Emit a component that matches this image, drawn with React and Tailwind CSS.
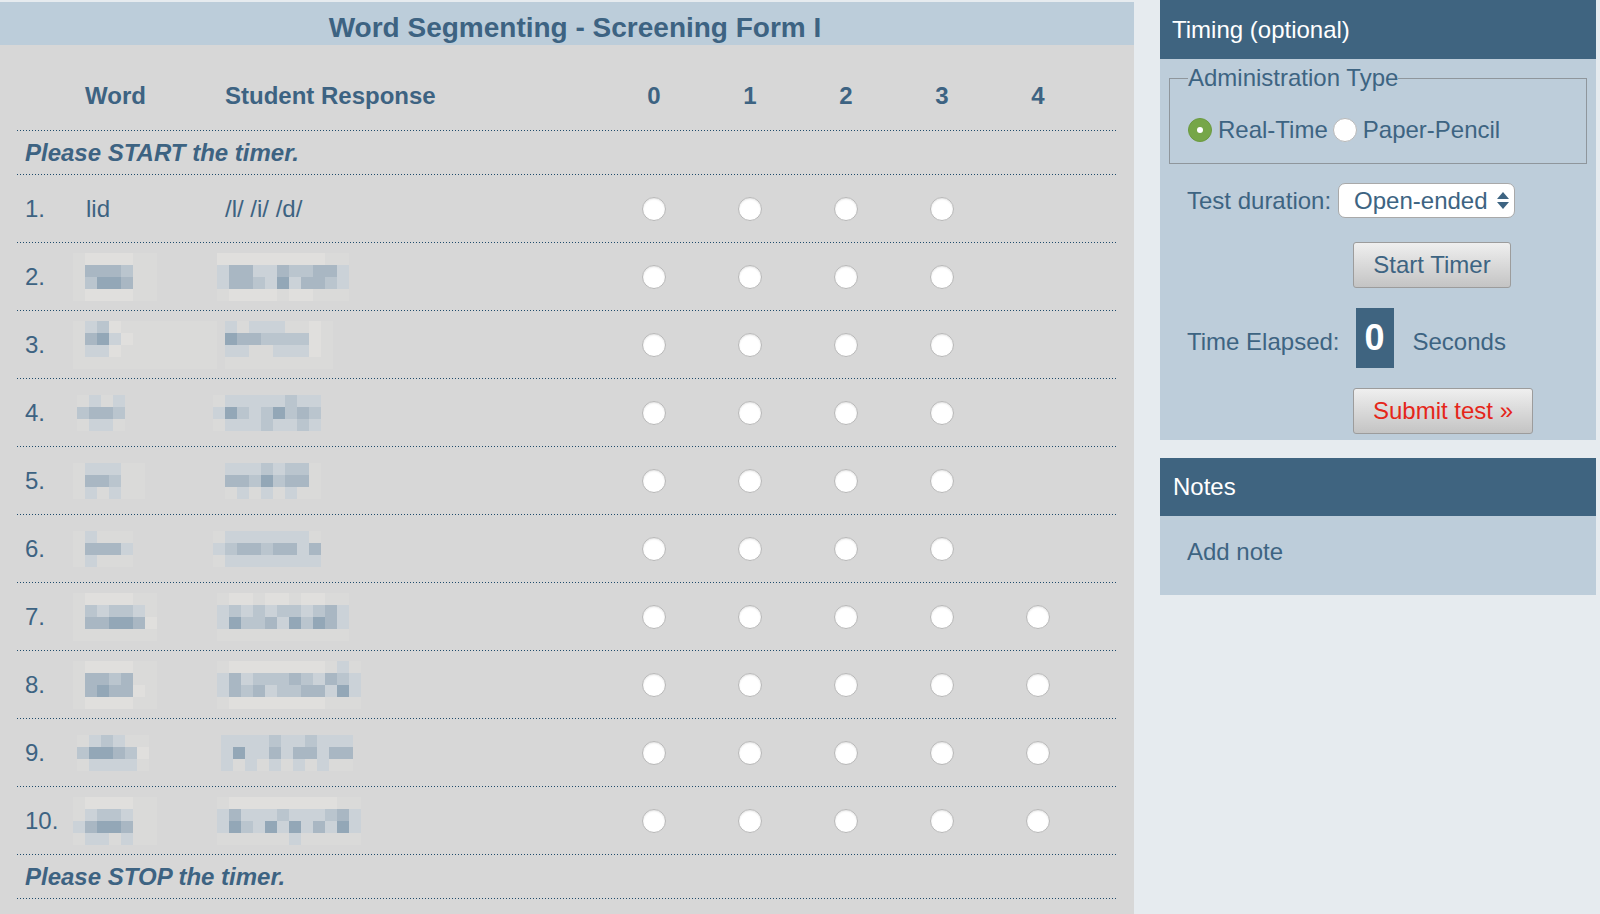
import React from 'react'

// pixel levels used for the blurred (mosaic) cells
const LEVEL = {
  '.': 'bg-transparent',
  v: 'bg-[#dadad9]',
  w: 'bg-[#e0dfdd]',
  '1': 'bg-[#cbd2d8]',
  '2': 'bg-[#bac5ce]',
  '3': 'bg-[#a9b7c3]',
  '4': 'bg-[#93a7b7]',
}

const ROWS = [
  { n: '1.', word: 'lid', resp: '/l/ /i/ /d/', max: 3 },
  {
    n: '2.',
    max: 3,
    w: { ml: 'ml-0', p: ['vwwwwvv', 'v3332vv', 'v2443vv', 'vwwwwvv'] },
    r: { ml: 'ml-[4px]', p: ['wwwwwwwwwvv', '13311322331', '13321413321', 'vwwwwvwwvvv'] },
  },
  {
    n: '3.',
    max: 3,
    w: { ml: 'ml-0', p: ['v12wvvvvvvvv', 'v341wvvvvvvv', 'v11wvvvvvvvv', 'vvvvvvvvvvvv'] },
    r: { ml: 'ml-[12px]', p: ['1v111vvwv', '4332222wv', '11vv111wv', 'vvvvvvvvv'] },
  },
  {
    n: '4.',
    max: 3,
    w: { ml: 'ml-[4px]', p: ['v1v1', '2332', 'v11v'] },
    r: { ml: 'ml-0', p: ['v11111211', '142124232', 'v11121121'] },
  },
  {
    n: '5.',
    max: 3,
    w: { ml: 'ml-0', p: ['v111vv', 'v332vv', 'v1v1vv'] },
    r: { ml: 'ml-[12px]', p: ['1112122v', '3324233v', 'v1v1v1vv'] },
  },
  {
    n: '6.',
    max: 3,
    w: { ml: 'ml-0', p: ['v1vvv', 'v3331', 'v1vvv'] },
    r: { ml: 'ml-0', p: ['v1111111v', '123323313', 'v11111111'] },
  },
  {
    n: '7.',
    max: 4,
    w: { ml: 'ml-0', p: ['vwwwwvv', 'v21221v', 'v33443w', 'vvvvvvv'] },
    r: { ml: 'ml-[4px]', p: ['vwwvwwvwwvv', '12121221231', '14223142431', 'vvvvvvvvvvv'] },
  },
  {
    n: '8.',
    max: 4,
    w: { ml: 'ml-0', p: ['vwwwwvv', 'v3323vv', 'v3433wv', 'vwwwwvv'] },
    r: { ml: 'ml-[4px]', p: ['vwwwwwwwwv1v', '131222321321', '132312233141', 'vwwwwwwwwvvv'] },
  },
  {
    n: '9.',
    max: 4,
    w: { ml: 'ml-[4px]', p: ['v121vv', '24432w', 'v1111v'] },
    r: { ml: 'ml-[8px]', p: ['11112112111', '14113133133', '1v1v1v1v1vv'] },
  },
  {
    n: '10.',
    max: 4,
    w: { ml: 'ml-0', p: ['vwwwwvv', 'v1221vv', '13443vv', 'v11v1vv'] },
    r: { ml: 'ml-[4px]', p: ['vwwwwwwwwwvv', '131112111231', '142141413141', 'vvvvvv1vvvvv'] },
  },
]

function Mosaic({ m }) {
  return (
    <div className={`flex flex-col ${m.ml}`}>
      {m.p.map((row, i) => (
        <div key={i} className="flex">
          {row.split('').map((c, j) => (
            <div key={j} className={`w-[12px] h-[12px] ${LEVEL[c]}`} />
          ))}
        </div>
      ))}
    </div>
  )
}

function Dots() {
  return <div className="h-px bg-[repeating-linear-gradient(90deg,#1f4b6b_0_1px,transparent_1px_3px)]" />
}

function Radio() {
  return (
    <span className="block w-6 h-6 rounded-full bg-white border border-[#b8b8b8] shadow-[inset_0_1px_2px_rgba(0,0,0,0.12)]" />
  )
}

function ScoreCells({ max }) {
  return [0, 1, 2, 3, 4].map((s) => (
    <div key={s} className="w-[96px] flex justify-center">
      {s <= max && <Radio />}
    </div>
  ))
}

function ScoringForm() {
  return (
    <div className="w-[1134px] mt-[2px] bg-[#d7d7d7] shrink-0">
      <div className="h-[43px] bg-[#bccdda] flex items-center justify-center pt-[9px] pl-[16px] text-[28px] font-bold text-[#3d6382]">
        Word Segmenting - Screening Form I
      </div>
      <div className="px-[17px]">
        <div className="h-[85px] pt-[17px] flex items-center text-[24px] font-bold text-[#3d6382]">
          <div className="w-[56px]" />
          <div className="w-[140px] pl-[12px]">Word</div>
          <div className="w-[393px] pl-[12px]">Student Response</div>
          {[0, 1, 2, 3, 4].map((s) => (
            <div key={s} className="w-[96px] text-center">{s}</div>
          ))}
        </div>
        <Dots />
        <div className="h-[43px] flex items-center pl-[8px] text-[24px] font-bold italic text-[#3d6382]">
          Please START the timer.
        </div>
        <Dots />
        {ROWS.map((r) => (
          <div key={r.n}>
            <div className="h-[67px] flex items-center text-[24px] text-[#3d6382]">
              <div className="w-[56px] pl-[8px]">{r.n}</div>
              <div className="w-[140px] flex">
                {r.w ? <Mosaic m={r.w} /> : <span className="pl-[13px]">{r.word}</span>}
              </div>
              <div className="w-[393px] flex">
                {r.r ? <Mosaic m={r.r} /> : <span className="pl-[12px]">{r.resp}</span>}
              </div>
              <ScoreCells max={r.max} />
            </div>
            <Dots />
          </div>
        ))}
        <div className="h-[43px] flex items-center pl-[8px] text-[24px] font-bold italic text-[#3d6382]">
          Please STOP the timer.
        </div>
        <Dots />
      </div>
    </div>
  )
}

function SelectArrows() {
  return (
    <svg width="12" height="18" viewBox="0 0 12 18" className="fill-[#3d6482]">
      <path d="M0 7 L6 0 L12 7 Z" />
      <path d="M0 10 L12 10 L6 17 Z" />
    </svg>
  )
}

function TimingPanel() {
  const btn =
    'h-[46px] ml-[184px] rounded-[3px] border border-[#9c9c9c] bg-gradient-to-b from-[#efefef] to-[#c4c4c4] text-[24px] flex items-center justify-center'

  return (
    <div className="bg-[#bdcdda] pb-[6px]">
      <div className="h-[59px] bg-[#3f6480] flex items-center pl-[12px] text-[24px] text-white">
        Timing (optional)
      </div>
      <div className="px-[9px] pt-[5px] text-[24px] text-[#3d6482]">
        <fieldset className="border border-[#8f969c] pl-[18px] pt-[24px] pb-[19px]">
          <legend className="leading-[28px] px-0">Administration Type</legend>
          <div className="h-[28px] flex items-center">
            <span className="w-6 h-6 rounded-full bg-[#76a648] border border-[#6b9a40] flex items-center justify-center">
              <span className="w-[6px] h-[6px] rounded-full bg-white" />
            </span>
            <span className="ml-[6px]">Real-Time</span>
            <span className="ml-[5px] w-6 h-6 rounded-full bg-white border border-[#b8b8b8]" />
            <span className="ml-[6px]">Paper-Pencil</span>
          </div>
        </fieldset>

        <div className="mt-[19px] h-[35px] flex items-center pl-[18px]">
          <span>Test duration:</span>
          <div className="ml-[7px] w-[177px] h-[35px] bg-white rounded-[7px] border border-[#a9a9a9] flex items-center justify-between pl-[15px] pr-[5px]">
            <span>Open-ended</span>
            <SelectArrows />
          </div>
        </div>

        <button className={`${btn} mt-[24px] w-[158px] text-[#3d6482]`}>Start Timer</button>

        <div className="mt-[20px] h-[60px] flex items-center pl-[18px]">
          <span className="mt-[8px]">Time Elapsed:</span>
          <div className="ml-[16px] w-[38px] h-[60px] bg-[#3f6480] flex items-center justify-center text-white text-[36px] font-bold">
            0
          </div>
          <span className="ml-[19px] mt-[8px]">Seconds</span>
        </div>

        <button className={`${btn} mt-[20px] w-[180px] text-[#e5261a]`}>Submit test »</button>
      </div>
    </div>
  )
}

function NotesPanel() {
  return (
    <div className="mt-[18px] bg-[#bdcdda]">
      <div className="h-[58px] bg-[#3f6480] flex items-center pl-[13px] text-[24px] text-white">Notes</div>
      <div className="h-[79px] flex items-center pl-[27px] pb-[7px] text-[24px] text-[#3d6482]">Add note</div>
    </div>
  )
}

export default function App() {
  return (
    <div className="flex h-[914px] overflow-hidden bg-[#e6ebef] font-['Liberation_Sans',Arial,sans-serif]">
      <ScoringForm />
      <div className="ml-[26px] w-[436px] shrink-0">
        <TimingPanel />
        <NotesPanel />
      </div>
    </div>
  )
}
